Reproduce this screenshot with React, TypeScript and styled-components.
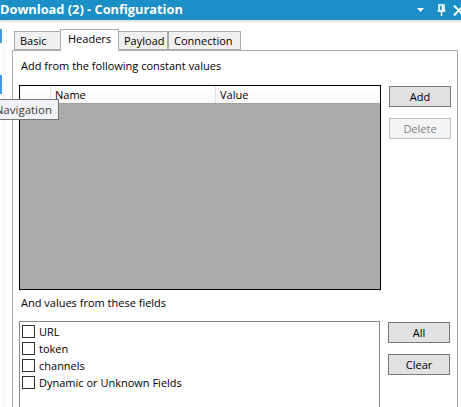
import styled, { createGlobalStyle } from 'styled-components';

const GlobalStyle = createGlobalStyle`
  html, body {
    margin: 0;
    padding: 0;
    background: #ffffff;
  }
  body {
    font-family: 'Open Sans', 'Noto Sans', sans-serif;
    font-size: 11px;
    color: #000000;
  }
`;

const Window = styled.div`
  position: relative;
  width: 461px;
  height: 407px;
  overflow: hidden;
  background: #ffffff;
  display: flex;
  flex-direction: column;
`;

const TitleBar = styled.div`
  height: 20px;
  background: #1b8fc6;
  display: flex;
  align-items: center;
  flex-shrink: 0;
`;

const Title = styled.div`
  color: #ffffff;
  font-weight: 700;
  font-size: 12.8px;
  line-height: 18px;
  margin-top: -2px;
  white-space: nowrap;
`;

const TitleIcons = styled.div`
  margin-left: auto;
  display: flex;
  align-items: center;
  margin-right: -4px;
`;

const TitleIcon = styled.span<{ $space: number }>`
  display: flex;
  margin-right: ${p => p.$space}px;
`;

const TitleRule = styled.div`
  height: 2px;
  background: #e4e4e4;
  flex-shrink: 0;
`;

const Body = styled.div`
  flex: 1;
  display: flex;
  min-height: 0;
`;

const SideRail = styled.div`
  width: 11px;
  flex-shrink: 0;
  display: flex;
  flex-direction: column;
  border-left: 1px solid transparent;
  background: linear-gradient(to right, #ffffff 0, #ffffff 2px, #f2f2f2 2px, #f7f7f7 3px, #ffffff 6px);
`;

const RailMark = styled.div<{ $top: number; $height: number }>`
  width: 2px;
  margin-left: -1px;
  margin-top: ${p => p.$top}px;
  height: ${p => p.$height}px;
  background: #3d9be0;
`;

const Main = styled.div`
  flex: 1;
  display: flex;
  flex-direction: column;
  margin-right: 3px;
  min-width: 0;
`;

const TabStrip = styled.div`
  height: 28px;
  display: flex;
  align-items: flex-end;
  padding-left: 2px;
  flex-shrink: 0;
`;

const Tab = styled.div<{ $active?: boolean; $width: number }>`
  box-sizing: border-box;
  width: ${p => p.$width}px;
  height: ${p => (p.$active ? 22 : 19)}px;
  margin-bottom: ${p => (p.$active ? -1 : 0)}px;
  margin-left: ${p => (p.$active ? -1 : 0)}px;
  margin-right: ${p => (p.$active ? -1 : 0)}px;
  position: relative;
  z-index: ${p => (p.$active ? 2 : 1)};
  background: ${p => (p.$active ? '#ffffff' : '#f0f0f0')};
  border: 1px solid #acacac;
  border-bottom: ${p => (p.$active ? 'none' : '1px solid #acacac')};
  display: flex;
  align-items: ${p => (p.$active ? 'flex-start' : 'center')};
  padding-top: ${p => (p.$active ? 1 : 0)}px;
  padding-left: ${p => (p.$active ? 7 : 5)}px;
  font-size: 11px;
  line-height: 16px;
  white-space: nowrap;
`;

const TabPanel = styled.div`
  flex: 1;
  border: 1px solid #acacac;
  border-bottom: none;
  padding: 7px 0 0 6px;
  display: flex;
  flex-direction: column;
  min-height: 0;
`;

const SectionLabel = styled.div<{ $before?: number; $after: number }>`
  height: 16px;
  line-height: 16px;
  padding-left: 2px;
  margin-top: ${p => p.$before ?? 0}px;
  margin-bottom: ${p => p.$after}px;
  white-space: nowrap;
`;

const Row = styled.div`
  display: flex;
  gap: 8px;
`;

const Grid = styled.div`
  box-sizing: border-box;
  width: 362px;
  height: 205px;
  border: 1px solid #000000;
  background: #ababab;
  display: flex;
  flex-direction: column;
`;

const GridHeader = styled.div`
  height: 17px;
  background: linear-gradient(#ffffff, #f8f8f8);
  border-bottom: 1px solid #a0a0a0;
  display: flex;
`;

const HeaderCell = styled.div<{ $width?: number }>`
  box-sizing: border-box;
  width: ${p => (p.$width ? `${p.$width}px` : 'auto')};
  flex: ${p => (p.$width ? '0 0 auto' : '1')};
  border-right: ${p => (p.$width ? '1px solid #e3e3e3' : 'none')};
  padding-left: 4px;
  line-height: 17px;
  white-space: nowrap;
`;

const ButtonColumn = styled.div`
  display: flex;
  flex-direction: column;
  gap: 11px;
  padding-top: 1px;
`;

const Button = styled.button<{ $disabled?: boolean }>`
  box-sizing: border-box;
  width: 62px;
  height: 21px;
  padding: 0;
  font-family: inherit;
  font-size: 11px;
  color: ${p => (p.$disabled ? '#838383' : '#000000')};
  background: ${p => (p.$disabled ? '#f4f4f4' : '#e1e1e1')};
  border: 1px solid ${p => (p.$disabled ? '#bfbfbf' : '#7a7a7a')};
  border-radius: 0;
`;

const ListBox = styled.div`
  box-sizing: border-box;
  width: 361px;
  height: 110px;
  border: 1px solid #828790;
  border-bottom: none;
  padding: 3px 0 0 2px;
  display: flex;
  flex-direction: column;
`;

const CheckRow = styled.label`
  height: 17px;
  display: flex;
  align-items: flex-start;
  gap: 4px;
  white-space: nowrap;
`;

const CheckBox = styled.span`
  box-sizing: border-box;
  width: 13px;
  height: 13px;
  border: 1px solid #333333;
  background: #ffffff;
  flex-shrink: 0;
`;

const CheckText = styled.span`
  line-height: 13px;
`;

// tooltip hanging over the left edge of the panel
const Tooltip = styled.div`
  position: absolute;
  left: -9px;
  top: 99px;
  box-sizing: border-box;
  width: 68px;
  height: 21px;
  background: #f1f2f7;
  border: 1px solid #767676;
  display: flex;
  align-items: center;
  justify-content: flex-end;
  padding-right: 6px;
  font-size: 11.5px;
  color: #3c3c3c;
  white-space: nowrap;
`;

const fields = ['URL', 'token', 'channels', 'Dynamic or Unknown Fields'];

const tabs = [
  { name: 'Basic', width: 47 },
  { name: 'Headers', width: 59, active: true },
  { name: 'Payload', width: 50 },
  { name: 'Connection', width: 73 },
];

export default function App() {
  return (
    <>
      <GlobalStyle />
      <Window>
        <TitleBar>
          <Title>Download (2) - Configuration</Title>
          <TitleIcons>
            <TitleIcon $space={12}>
              <svg width="7" height="4" viewBox="0 0 7 4">
                <path d="M0 0H7L3.5 4Z" fill="#ffffff" />
              </svg>
            </TitleIcon>
            <TitleIcon $space={6}>
              <svg width="11" height="12" viewBox="0 0 11 12">
                <path d="M3 1H8V7H3Z M1.5 7H9.5 M5.5 7V12" stroke="#ffffff" strokeWidth="1.6" fill="none" />
                <path d="M6.3 1.5V6.5" stroke="#ffffff" strokeWidth="1.4" />
              </svg>
            </TitleIcon>
            <TitleIcon $space={0}>
              <svg width="12" height="11" viewBox="0 0 12 11">
                <path d="M1 0.5L10.5 10.5M10.5 0.5L1 10.5" stroke="#ffffff" strokeWidth="2" />
              </svg>
            </TitleIcon>
          </TitleIcons>
        </TitleBar>
        <TitleRule />
        <Body>
          <SideRail>
            <RailMark $top={7} $height={14} />
            <RailMark $top={32} $height={19} />
          </SideRail>
          <Main>
            <TabStrip>
              {tabs.map(t => (
                <Tab key={t.name} $active={t.active} $width={t.width}>
                  {t.name}
                </Tab>
              ))}
            </TabStrip>
            <TabPanel>
              <SectionLabel $after={11}>Add from the following constant values</SectionLabel>
              <Row>
                <Grid>
                  <GridHeader>
                    <HeaderCell $width={31} />
                    <HeaderCell $width={165}>Name</HeaderCell>
                    <HeaderCell>Value</HeaderCell>
                  </GridHeader>
                </Grid>
                <ButtonColumn>
                  <Button>Add</Button>
                  <Button $disabled>Delete</Button>
                </ButtonColumn>
              </Row>
              <SectionLabel $before={5} $after={10}>
                And values from these fields
              </SectionLabel>
              <Row>
                <ListBox>
                  {fields.map(f => (
                    <CheckRow key={f}>
                      <CheckBox />
                      <CheckText>{f}</CheckText>
                    </CheckRow>
                  ))}
                </ListBox>
                <ButtonColumn>
                  <Button>All</Button>
                  <Button>Clear</Button>
                </ButtonColumn>
              </Row>
            </TabPanel>
          </Main>
        </Body>
        <Tooltip>Navigation</Tooltip>
      </Window>
    </>
  );
}
